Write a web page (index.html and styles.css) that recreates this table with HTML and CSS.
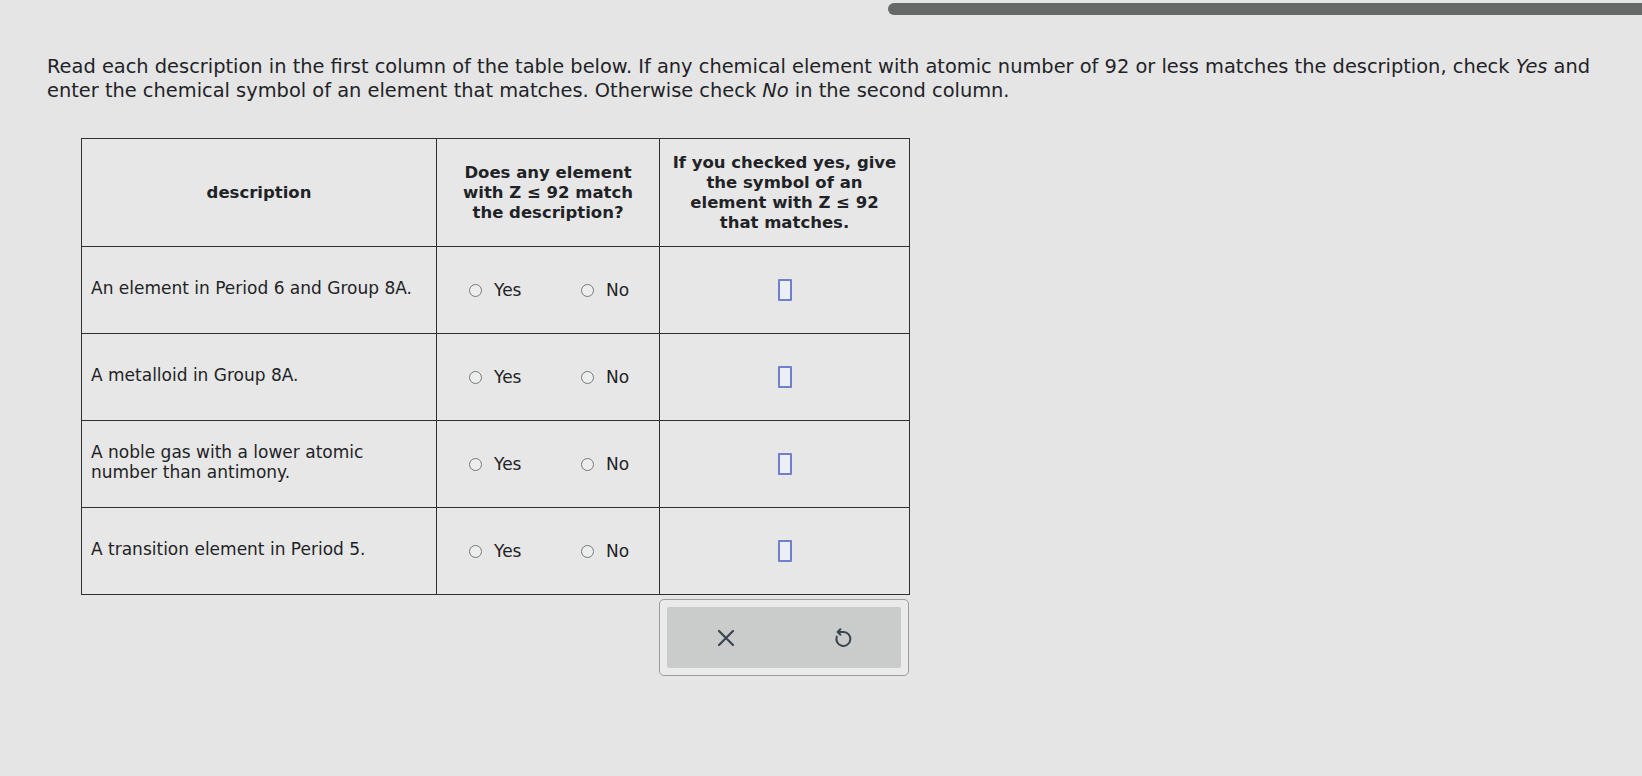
FILE: index.html
```html
<!DOCTYPE html>
<html lang="en">
<head>
<meta charset="utf-8">
<title>Elements table</title>
<link rel="stylesheet" href="styles.css">
</head>
<body>
<div class="page">
  <div class="topbar"><div class="progress"></div></div>
  <p class="intro"><span class="line">Read each description in the first column of the table below. If any chemical element with atomic number of 92 or less matches the description, check <i>Yes</i> and</span><span class="line">enter the chemical symbol of an element that matches. Otherwise check <i>No</i> in the second column.</span></p>
  <div class="question">
    <table class="grid">
      <colgroup><col class="c1"><col class="c2"><col class="c3"></colgroup>
      <thead>
        <tr>
          <th>description</th>
          <th>Does any element<br>with Z ≤ 92 match<br>the description?</th>
          <th>If you checked yes, give<br>the symbol of an<br>element with Z ≤ 92<br>that matches.</th>
        </tr>
      </thead>
      <tbody>
        <tr>
          <td class="desc">An element in Period 6 and Group 8A.</td>
          <td><div class="choices"><span class="opt"><span class="radio"></span>Yes</span><span class="opt"><span class="radio"></span>No</span></div></td>
          <td class="ans"><span class="blank"></span></td>
        </tr>
        <tr>
          <td class="desc">A metalloid in Group 8A.</td>
          <td><div class="choices"><span class="opt"><span class="radio"></span>Yes</span><span class="opt"><span class="radio"></span>No</span></div></td>
          <td class="ans"><span class="blank"></span></td>
        </tr>
        <tr>
          <td class="desc"><span class="line">A noble gas with a lower atomic</span><span class="line">number than antimony.</span></td>
          <td><div class="choices"><span class="opt"><span class="radio"></span>Yes</span><span class="opt"><span class="radio"></span>No</span></div></td>
          <td class="ans"><span class="blank"></span></td>
        </tr>
        <tr>
          <td class="desc">A transition element in Period 5.</td>
          <td><div class="choices"><span class="opt"><span class="radio"></span>Yes</span><span class="opt"><span class="radio"></span>No</span></div></td>
          <td class="ans"><span class="blank"></span></td>
        </tr>
      </tbody>
    </table>
    <div class="actions">
      <div class="actions-inner">
        <button class="act" aria-label="Clear">
          <svg width="18" height="18" viewBox="0 0 18 18"><path d="M2 2 L16 16 M16 2 L2 16" stroke="#3a4550" stroke-width="2.2" fill="none" stroke-linecap="round"/></svg>
        </button>
        <button class="act" aria-label="Undo">
          <svg width="20" height="21" viewBox="0 0 20 21"><path d="M10.5 5 A7 7 0 1 1 3.8 9.6" stroke="#3a4550" stroke-width="2" fill="none" stroke-linecap="round"/><path d="M10.5 5 H4.6 M7.4 2.2 L4.6 5 L7.4 7.8" stroke="#3a4550" stroke-width="2" fill="none" stroke-linecap="round" stroke-linejoin="round"/></svg>
        </button>
      </div>
    </div>
  </div>
</div>
</body>
</html>
```
FILE: styles.css
```css
html, body {
  margin: 0;
  height: 100%;
  overflow: hidden;
  background: #e4e5e4;
}
body {
  font-family: "DejaVu Sans", "Liberation Sans", sans-serif;
  color: #1f2327;
}
.page {
  display: flex;
  flex-direction: column;
  width: 1642px;
  height: 776px;
}
.topbar {
  display: flex;
  justify-content: flex-end;
  padding-top: 3px;
  height: 12px;
}
.progress {
  width: 754px;
  height: 12px;
  background: #666867;
  border-radius: 6px 0 0 6px;
}
.intro {
  margin: 40px 0 0 47px;
  width: 1580px;
  font-size: 19.4px;
  line-height: 24px;
}
.line {
  display: block;
  white-space: nowrap;
}
.question {
  margin: 35px 0 0 81px;
  width: 828px;
  display: flex;
  flex-direction: column;
}
.grid {
  border-collapse: collapse;
  table-layout: fixed;
  width: 828px;
  background: #e6e7e6;
}
.c1 { width: 355px; }
.c2 { width: 223px; }
.c3 { width: 250px; }
.grid th, .grid td {
  border: 1px solid #2e3032;
  padding: 0;
  vertical-align: middle;
}
.grid thead tr { height: 108px; }
.grid tbody tr { height: 87px; }
.grid th {
  font-size: 16.5px;
  line-height: 20px;
  font-weight: bold;
  text-align: center;
}
.grid td {
  font-size: 17px;
  line-height: 20px;
}
.desc {
  padding-left: 9px !important;
  padding-bottom: 4px !important;
}
.choices {
  display: grid;
  grid-template-columns: 112px 1fr;
  padding-left: 32px;
}
.opt {
  display: flex;
  align-items: center;
  gap: 12px;
}
.radio {
  width: 11px;
  height: 11px;
  border: 1.5px solid #77797b;
  border-radius: 50%;
  background: #eceeed;
}
.ans { text-align: center; }
.blank {
  display: inline-block;
  width: 10px;
  height: 18px;
  border: 2px solid #6f80d0;
  border-radius: 1px;
  background: #eceff5;
  vertical-align: middle;
}
.actions {
  align-self: flex-end;
  margin-top: 4px;
  width: 250px;
  box-sizing: border-box;
  border: 1px solid #9b9d9c;
  border-radius: 5px;
  padding: 7px;
  background: #e9eae9;
}
.actions-inner {
  display: flex;
  height: 61px;
  background: #c9cccb;
  border-radius: 2px;
}
.act {
  flex: 1;
  display: flex;
  align-items: center;
  justify-content: center;
  background: none;
  border: 0;
  padding: 0;
}
```
